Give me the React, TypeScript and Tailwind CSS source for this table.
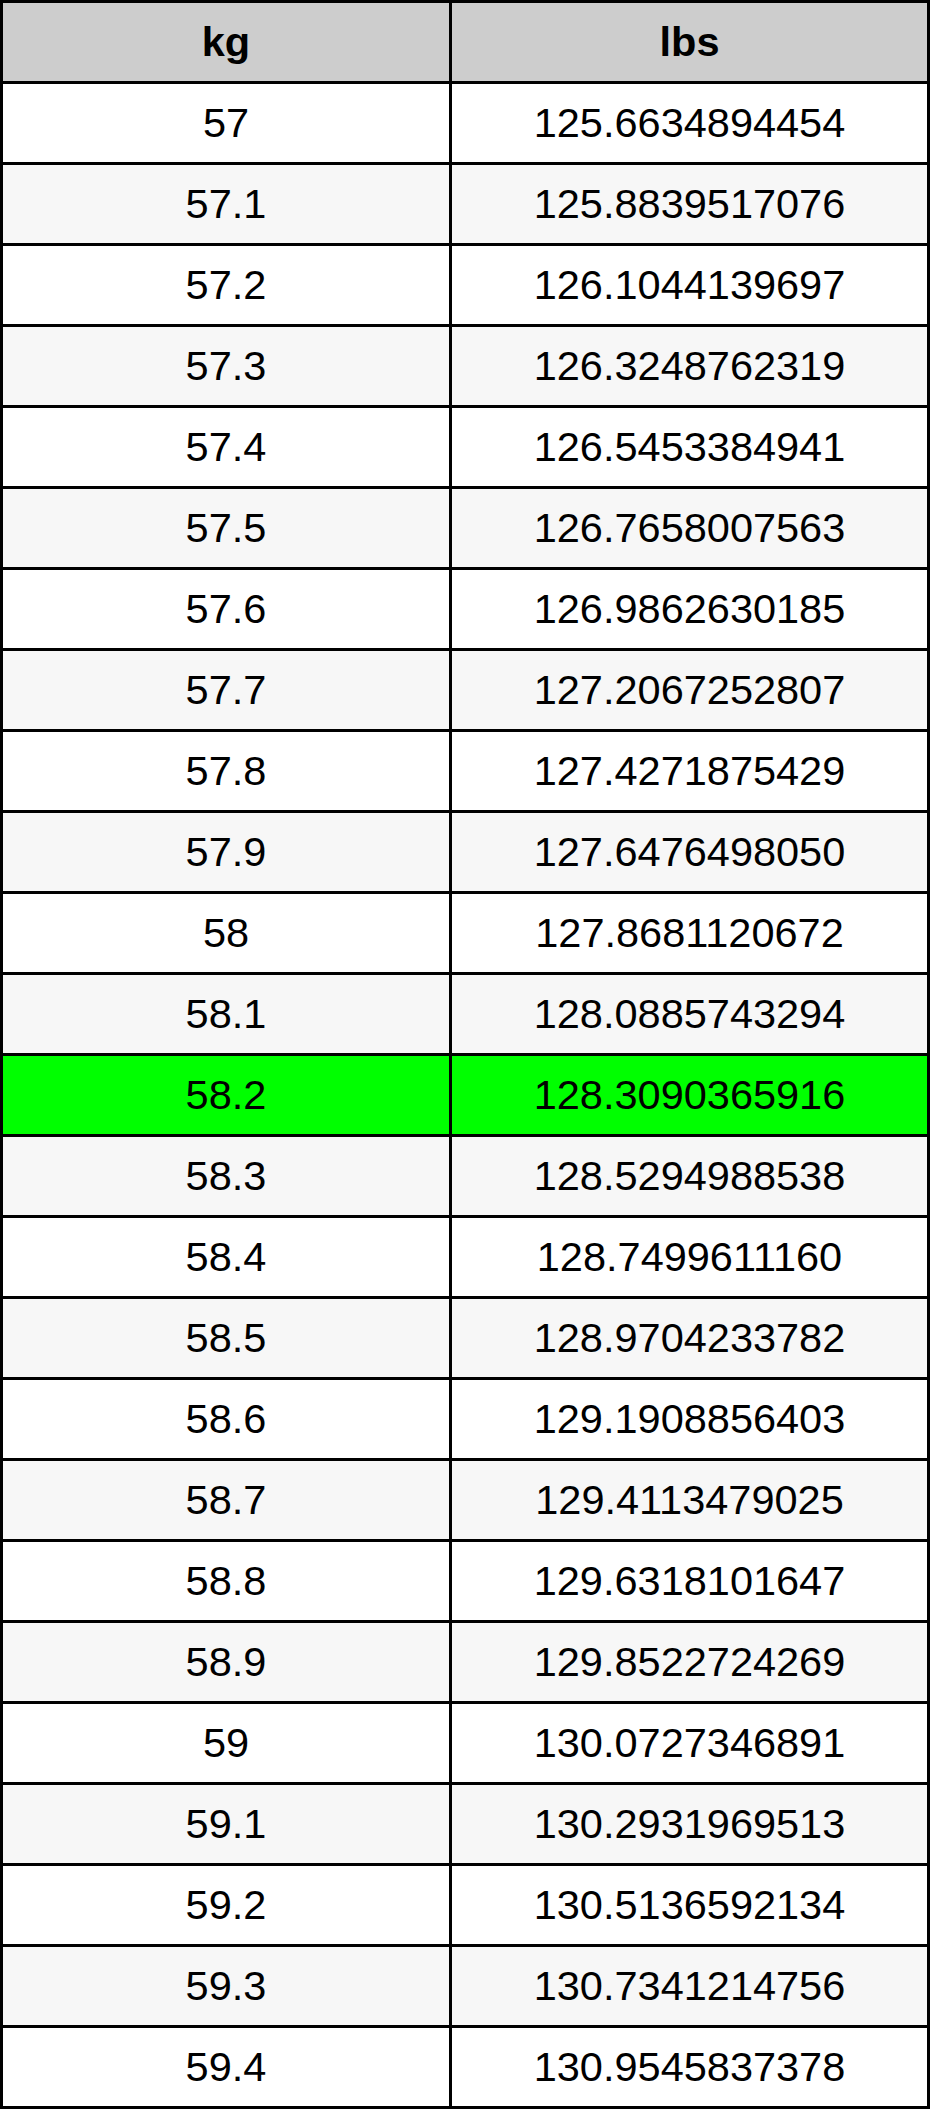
const rows: Array<[string, string]> = [
  ['57', '125.6634894454'],
  ['57.1', '125.8839517076'],
  ['57.2', '126.1044139697'],
  ['57.3', '126.3248762319'],
  ['57.4', '126.5453384941'],
  ['57.5', '126.7658007563'],
  ['57.6', '126.9862630185'],
  ['57.7', '127.2067252807'],
  ['57.8', '127.4271875429'],
  ['57.9', '127.6476498050'],
  ['58', '127.8681120672'],
  ['58.1', '128.0885743294'],
  ['58.2', '128.3090365916'],
  ['58.3', '128.5294988538'],
  ['58.4', '128.7499611160'],
  ['58.5', '128.9704233782'],
  ['58.6', '129.1908856403'],
  ['58.7', '129.4113479025'],
  ['58.8', '129.6318101647'],
  ['58.9', '129.8522724269'],
  ['59', '130.0727346891'],
  ['59.1', '130.2931969513'],
  ['59.2', '130.5136592134'],
  ['59.3', '130.7341214756'],
  ['59.4', '130.9545837378'],
];

const HIGHLIGHT = '58.2';

export default function App() {
  return (
    <div className="min-h-screen bg-white font-['Liberation_Sans',Arial,sans-serif] text-black">
      <div className="w-[930px] border-x-[3px] border-t-[3px] border-black">
        {/* header */}
        <div className="flex h-[81px] border-b-[3px] border-black bg-[#cdcdcd] text-[41.5px] font-bold">
          <div className="flex w-[449px] items-center justify-center border-r-[3px] border-black">kg</div>
          <div className="flex flex-1 items-center justify-center">lbs</div>
        </div>

        {rows.map(([kg, lbs], i) => {
          const bg = kg === HIGHLIGHT ? 'bg-[#00ff00]' : i % 2 === 0 ? 'bg-white' : 'bg-[#f7f7f7]';
          return (
            <div key={kg} className={`flex h-[81px] border-b-[3px] border-black text-[41.5px] ${bg}`}>
              <div className="flex w-[449px] items-center justify-center border-r-[3px] border-black">{kg}</div>
              <div className="flex flex-1 items-center justify-center">{lbs}</div>
            </div>
          );
        })}
      </div>
    </div>
  );
}
